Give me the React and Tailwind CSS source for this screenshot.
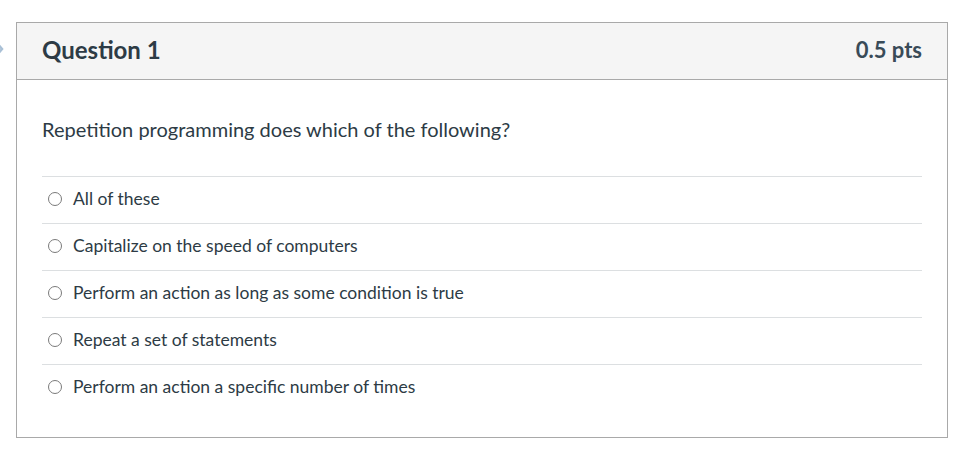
import React from 'react';

const answers = [
  'All of these',
  'Capitalize on the speed of computers',
  'Perform an action as long as some condition is true',
  'Repeat a set of statements',
  'Perform an action a specific number of times',
];

export default function App() {
  return (
    <div className="w-[975px] h-[466px] bg-white pt-[22px] flex text-[#2d3b45]" style={{ fontFamily: 'Lato, "Liberation Sans", sans-serif' }}>
      {/* left nav chevron, mostly cut off */}
      <div className="w-4 shrink-0 overflow-hidden pt-[18px]">
        <svg width="12" height="18" viewBox="0 0 12 18" className="-ml-[7px]">
          <path d="M3 2 L9 9 L3 16" fill="none" stroke="#a9c0d6" strokeWidth="2.5" />
        </svg>
      </div>

      <div className="w-[932px] h-[416px] border border-[#a9a9a9] flex flex-col">
        {/* Header */}
        <div className="h-[57px] shrink-0 bg-[#f5f5f5] border-b border-[#a9a9a9] flex items-center justify-between px-[25px]">
          <h2 className="text-[24px] font-bold leading-none pb-[3px]">Question 1</h2>
          <span className="text-[22px] font-bold leading-none text-[#394b58] pb-[3px]">0.5 pts</span>
        </div>

        {/* Body */}
        <div className="px-[25px] pt-[35px]">
          <p className="text-[20px] leading-[28px]">Repetition programming does which of the following?</p>
          <div className="mt-[33px]">
            {answers.map(a => (
              <div key={a} className="flex items-center gap-[11px] border-t border-[#dcdfe1] pt-[10px] pb-[12px] pl-[6px]">
                <span className="w-[14px] h-[14px] rounded-full border border-[#7a7a7a] bg-white shrink-0" />
                <span className="text-[17.5px] leading-[24px]">{a}</span>
              </div>
            ))}
          </div>
        </div>
      </div>
    </div>
  );
}
